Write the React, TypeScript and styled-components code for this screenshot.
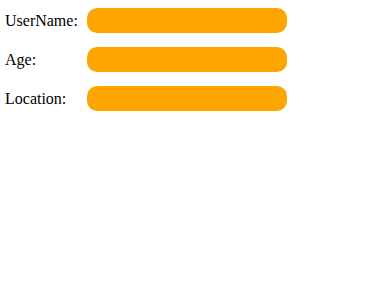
import React from "react";
import styled, { createGlobalStyle } from "styled-components";

const Global = createGlobalStyle`
  html, body { margin: 0; padding: 0; background: #fff; }
  body { font-family: "Liberation Serif", "Times New Roman", serif; font-size: 16px; color: #000; }
`;

const Form = styled.form`
  display: flex;
  flex-direction: column;
  gap: 14px;
  padding: 8px 0 0 5px;
`;

const Row = styled.div`
  display: flex;
  align-items: center;
`;

const Label = styled.label`
  width: 82px;
  line-height: 25px;
`;

const Input = styled.input`
  box-sizing: border-box;
  width: 200px;
  height: 25px;
  border: none;
  border-radius: 10px;
  background: #ffa500;
  outline: none;
  padding: 0 8px;
  font-family: inherit;
  font-size: 16px;
`;

const fields = [
  { id: "username", label: "UserName:" },
  { id: "age", label: "Age:" },
  { id: "location", label: "Location:" },
];

export default function App() {
  return (
    <>
      <Global />
      <Form onSubmit={(e) => e.preventDefault()}>
        {fields.map((f) => (
          <Row key={f.id}>
            <Label htmlFor={f.id}>{f.label}</Label>
            <Input id={f.id} type="text" />
          </Row>
        ))}
      </Form>
    </>
  );
}
